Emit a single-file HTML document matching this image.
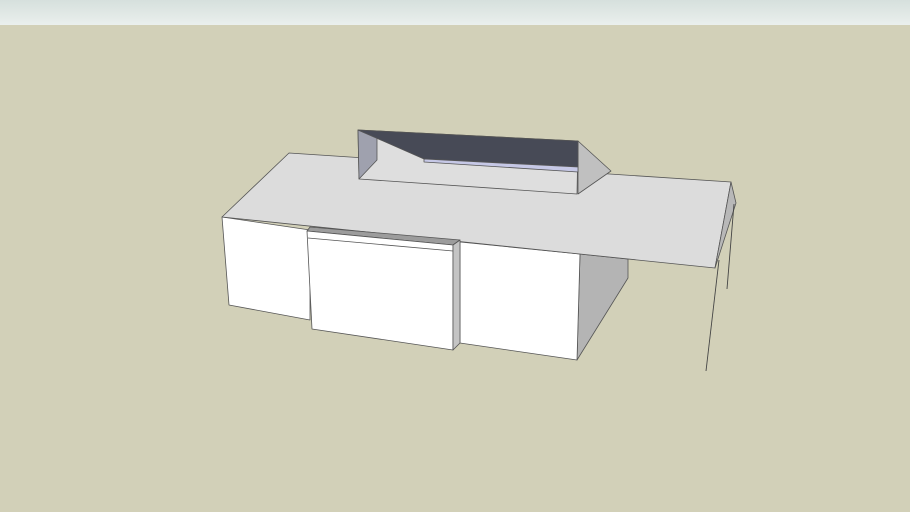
<!DOCTYPE html>
<html><head><style>html,body{margin:0;padding:0;width:910px;height:512px;overflow:hidden;background:#d2d0b8}</style></head>
<body>
<svg width="910" height="512" viewBox="0 0 910 512" xmlns="http://www.w3.org/2000/svg">
<defs><linearGradient id="sky" x1="0" y1="0" x2="0" y2="1"><stop offset="0" stop-color="#d6e0dd"/><stop offset="1" stop-color="#eaefed"/></linearGradient></defs>
<rect width="910" height="25" fill="url(#sky)"/>
<rect y="25" width="910" height="487" fill="#d2d0b8"/>
<g stroke="#555" stroke-width="0.8" stroke-linejoin="round">
<!-- right box side -->
<polygon points="580,254 628,259 628,278 577,360" fill="#b4b4b4"/>
<!-- left box front -->
<polygon points="222,217 310,230 310,320 229,305" fill="#fff"/>
<!-- right box front -->
<polygon points="460,242 580,254 577,360 460,343" fill="#fff"/>
<!-- slab top -->
<polygon points="289,153 731,182 715,268 222,217" fill="#dcdcdc"/>
<polygon points="731,182 736,203 715,268" fill="#b8b8b8"/>
<!-- door -->
<polygon points="307,231 310,227 460,240 453,245" fill="#9c9c9c"/>
<polygon points="307,231 453,245 453,350 312,329" fill="#fff"/>
<polygon points="453,245 460,240 460,343 453,350" fill="#c4c4c4"/>
<line x1="308" y1="238" x2="453" y2="251"/>
<!-- back hood -->
<polygon points="578,141 611,171 578,194" fill="#c0c0c0"/>
<polygon points="358,130 578,141 577,194 359,179" fill="#dedede"/>
<polygon points="358,130 377,138 377,160 359,179" fill="#9fa1ae"/>
<polygon points="358,130 578,141 578,167 424,159" fill="#474a56"/>
<polygon points="424,159 578,167 578,172 424,162" fill="#c6c8e6"/>
</g>
<g stroke="#444" stroke-width="0.9" fill="none">
<line x1="734" y1="204" x2="727" y2="289"/>
<line x1="719" y1="260" x2="706" y2="371"/>
</g>
</svg>
</body></html>
